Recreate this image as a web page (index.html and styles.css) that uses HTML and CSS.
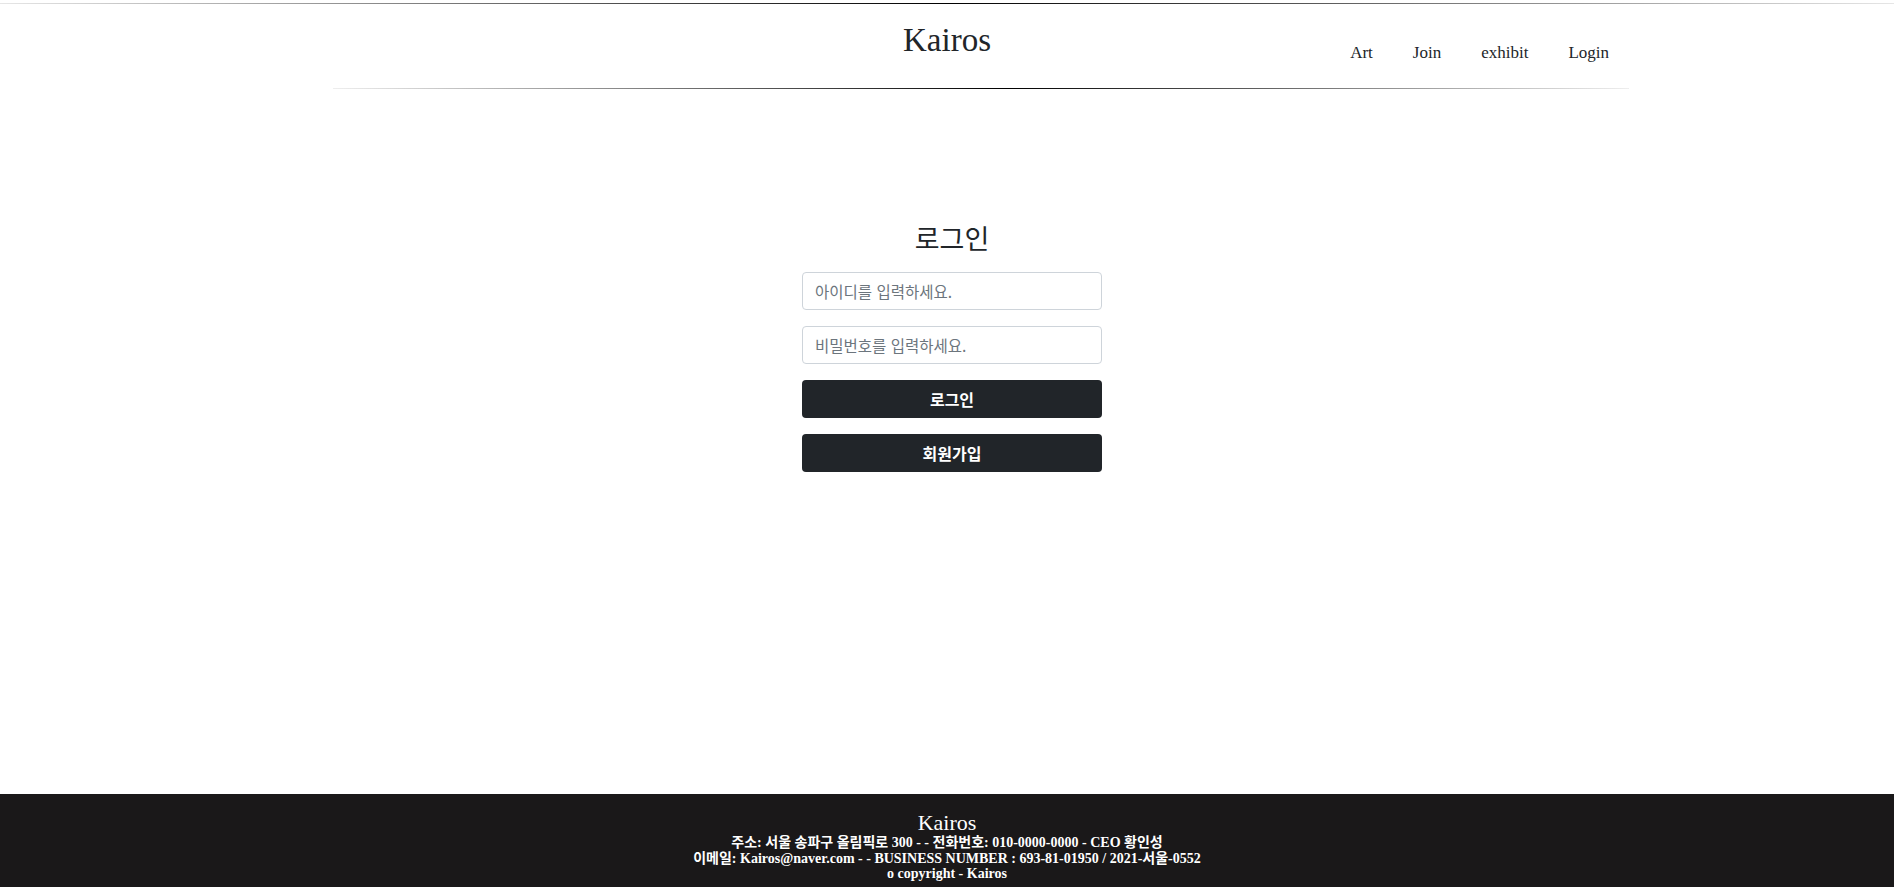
FILE: index.html
```html
<!DOCTYPE html>
<html lang="ko">
<head>
<meta charset="utf-8">
<title>Kairos</title>
<link rel="stylesheet" href="styles.css">
</head>
<body>
<div class="topline"></div>
<header class="header">
  <div class="header-side"></div>
  <h1 class="logo">Kairos</h1>
  <nav class="nav">
    <a class="nav-link" href="#">Art</a>
    <a class="nav-link" href="#">Join</a>
    <a class="nav-link" href="#">exhibit</a>
    <a class="nav-link" href="#">Login</a>
  </nav>
</header>
<div class="header-rule"></div>
<main class="main">
  <form class="login">
    <h2 class="login-title">로그인</h2>
    <input class="field" type="text" placeholder="아이디를 입력하세요.">
    <input class="field" type="password" placeholder="비밀번호를 입력하세요.">
    <button class="btn" type="button">로그인</button>
    <button class="btn" type="button">회원가입</button>
  </form>
</main>
<footer class="footer">
  <div class="footer-logo">Kairos</div>
  <div class="footer-line">주소: 서울 송파구 올림픽로 300 - - 전화번호: 010-0000-0000 - CEO 황인성</div>
  <div class="footer-line">이메일: Kairos@naver.com - - BUSINESS NUMBER : 693-81-01950 / 2021-서울-0552</div>
  <div class="footer-line">o copyright - Kairos</div>
</footer>
</body>
</html>
```
FILE: styles.css
```css
* { box-sizing: border-box; }
html, body { height: 100%; }
body {
  margin: 0;
  min-height: 100vh;
  display: flex;
  flex-direction: column;
  font-family: "Liberation Serif", "Noto Sans CJK KR", serif;
  color: #212529;
  background: #fff;
}
.topline {
  height: 1px;
  margin-top: 3px;
  background: linear-gradient(to right, #e6e6e6, #000 50%, #e6e6e6);
}
.header {
  display: grid;
  grid-template-columns: 1fr auto 1fr;
  height: 84px;
}
.logo {
  margin: 16px 0 0;
  font-size: 33px;
  line-height: 40px;
  font-weight: 400;
  color: #212529;
  align-self: start;
}
.nav {
  display: flex;
  justify-content: flex-end;
  align-self: start;
  margin-top: 37px;
  margin-right: 265px;
}
.nav-link {
  padding: 0 20px;
  font-size: 17px;
  line-height: 24px;
  color: #212529;
  text-decoration: none;
}
.header-rule {
  height: 1px;
  width: 1296px;
  margin-left: 333px;
  background: linear-gradient(to right, #eeeeee, #000 52%, #eeeeee);
}
.main {
  flex: 1;
  display: flex;
  justify-content: center;
}
.login {
  width: 300px;
  margin: 131px 0 0 10px;
  display: flex;
  flex-direction: column;
  gap: 16px;
}
.login-title {
  margin: 0;
  font-family: "Noto Sans CJK KR", sans-serif;
  font-size: 27px;
  line-height: 36px;
  font-weight: 400;
  text-align: center;
  color: #212529;
}
.field {
  height: 38px;
  padding: 6px 12px;
  border: 1px solid #ced4da;
  border-radius: 4px;
  font-family: "Noto Sans CJK KR", sans-serif;
  font-size: 15.5px;
  color: #212529;
  background: #fff;
}
.field::placeholder { color: #6c757d; }
.btn {
  height: 38px;
  border: 0;
  border-radius: 4px;
  background: #212529;
  color: #fff;
  font-family: "Noto Sans CJK KR", sans-serif;
  font-size: 16px;
  font-weight: 700;
}
.footer {
  height: 93px;
  padding-top: 17px;
  background: #1a1819;
  color: #fff;
  text-align: center;
}
.footer-logo {
  font-size: 22px;
  line-height: 24px;
}
.footer-line {
  font-size: 14px;
  line-height: 15.5px;
  font-weight: 700;
}
```
